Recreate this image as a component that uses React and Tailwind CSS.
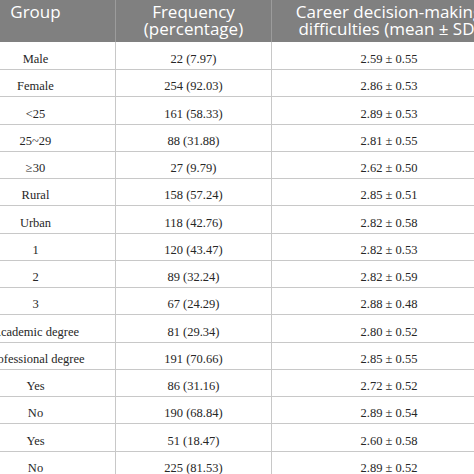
import React from "react";

const rows = [
  ["Male", "22 (7.97)", "2.59 ± 0.55"],
  ["Female", "254 (92.03)", "2.86 ± 0.53"],
  ["<25", "161 (58.33)", "2.89 ± 0.53"],
  ["25~29", "88 (31.88)", "2.81 ± 0.55"],
  ["≥30", "27 (9.79)", "2.62 ± 0.50"],
  ["Rural", "158 (57.24)", "2.85 ± 0.51"],
  ["Urban", "118 (42.76)", "2.82 ± 0.58"],
  ["1", "120 (43.47)", "2.82 ± 0.53"],
  ["2", "89 (32.24)", "2.82 ± 0.59"],
  ["3", "67 (24.29)", "2.88 ± 0.48"],
  ["Academic degree", "81 (29.34)", "2.80 ± 0.52"],
  ["Professional degree", "191 (70.66)", "2.85 ± 0.55"],
  ["Yes", "86 (31.16)", "2.72 ± 0.52"],
  ["No", "190 (68.84)", "2.89 ± 0.54"],
  ["Yes", "51 (18.47)", "2.60 ± 0.58"],
  ["No", "225 (81.53)", "2.89 ± 0.52"],
];

export default function App() {
  return (
    <div className="w-[474px] h-[474px] overflow-hidden bg-white">
      <div className="ml-[-44px] w-[550px]">
        <div
          className="grid grid-cols-[160px_156px_234px] h-[42px] bg-[#808080] text-white text-[17px] leading-[17px] text-center"
          style={{ fontFamily: '"Open Sans", sans-serif' }}
        >
          <div className="pt-[3px] border-r border-[#9c9c9c]">Group</div>
          <div className="pt-[3px] border-r border-[#9c9c9c]">
            Frequency
            <br />
            (percentage)
          </div>
          <div className="pt-[3px] whitespace-nowrap">
            Career decision-making
            <br />
            difficulties (mean ± SD)
          </div>
        </div>
        {rows.map((r, i) => (
          <div
            key={i}
            className="grid grid-cols-[160px_156px_234px] h-[27.25px] text-[12.5px] leading-[20px] text-[#262626] text-center"
            style={{ fontFamily: '"Liberation Serif", serif' }}
          >
            <div className="pt-[7px] border-b border-r border-[#c8c8c8] whitespace-nowrap">{r[0]}</div>
            <div className="pt-[7px] border-b border-r border-[#c8c8c8] whitespace-nowrap">{r[1]}</div>
            <div className="pt-[7px] border-b border-[#c8c8c8] whitespace-nowrap">{r[2]}</div>
          </div>
        ))}
      </div>
    </div>
  );
}
